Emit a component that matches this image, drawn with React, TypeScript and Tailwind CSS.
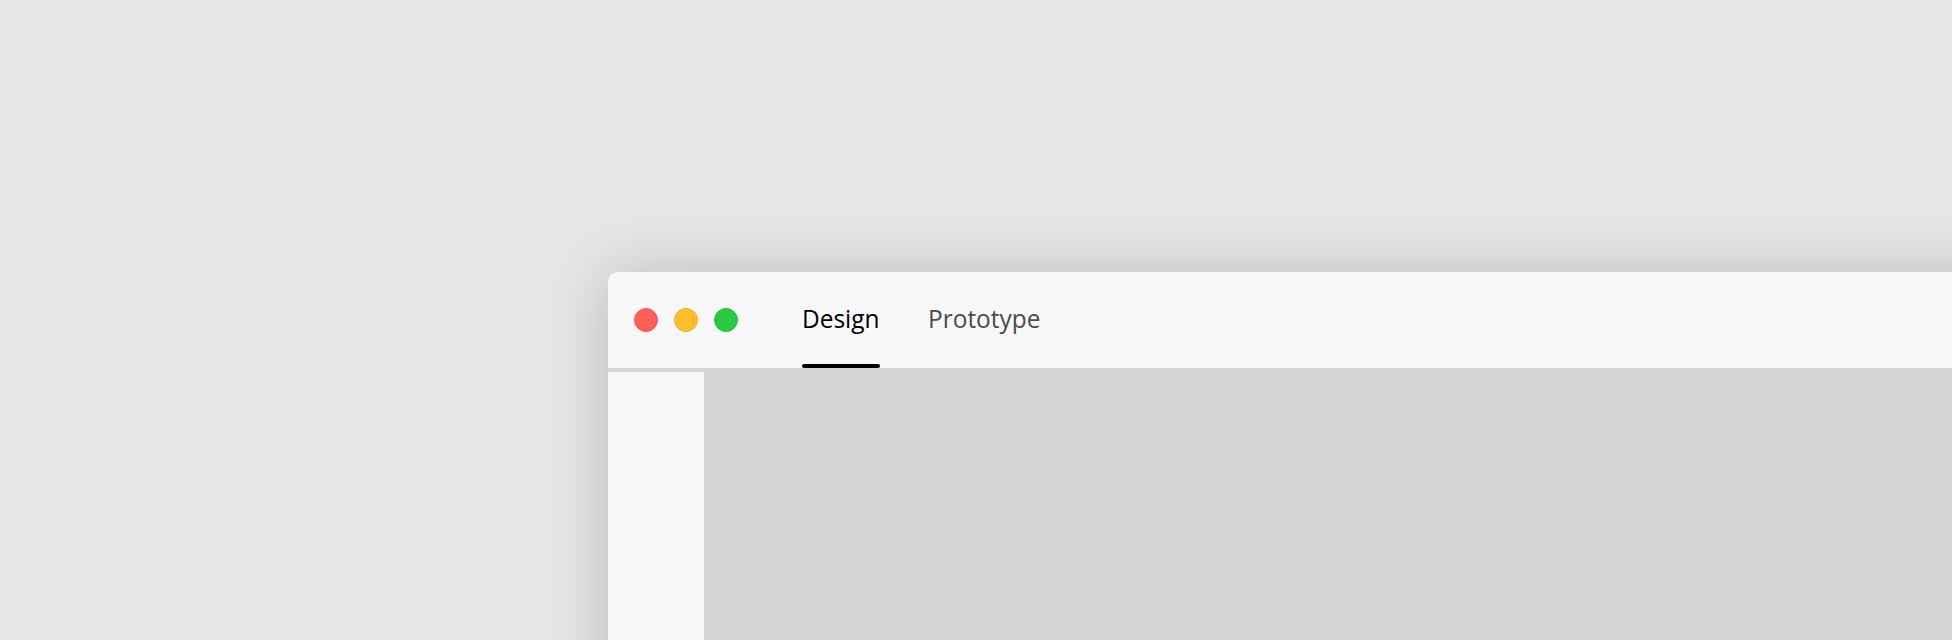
import { useState } from 'react';

const tabs = [
  { label: 'Design', width: 'w-[78px]' },
  { label: 'Prototype', width: 'w-[114px]' },
];

function WindowControls() {
  return (
    <div className="flex items-center gap-4">
      <span className="w-6 h-6 rounded-full bg-[#ff5f57] border border-[#ee5a53]" />
      <span className="w-6 h-6 rounded-full bg-[#ffbd2e] border border-[#edae2a]" />
      <span className="w-6 h-6 rounded-full bg-[#28ca42] border border-[#26bd3d]" />
    </div>
  );
}

export default function App() {
  const [active, setActive] = useState('Design');

  return (
    <div className="w-full h-screen overflow-hidden bg-[#e6e6e6] pt-[272px] pl-[608px] font-['Open_Sans',sans-serif]">
      <div className="flex flex-col w-[1600px] h-[900px] rounded-[10px] overflow-hidden bg-[#d5d5d5] shadow-[0_4px_64px_rgba(0,0,0,0.2)]">
        <header className="flex items-center shrink-0 h-24 pl-[26px] bg-[#f8f8f8]">
          <WindowControls />
          <nav className="flex h-full ml-16 gap-12">
            {tabs.map((tab) => (
              <button
                key={tab.label}
                onClick={() => setActive(tab.label)}
                className={`flex flex-col justify-end h-full text-left whitespace-nowrap text-[26px] leading-8 ${tab.width} ${active === tab.label ? 'text-black' : 'text-[#4b4b4b]'}`}
              >
                <span className="mb-[30px] origin-left scale-x-[0.94]">{tab.label}</span>
                <span className={`w-full h-1 rounded-full ${active === tab.label ? 'bg-black' : 'bg-transparent'}`} />
              </button>
            ))}
          </nav>
        </header>
        <aside className="w-24 mt-1 grow bg-[#f8f8f8]" />
      </div>
    </div>
  );
}
